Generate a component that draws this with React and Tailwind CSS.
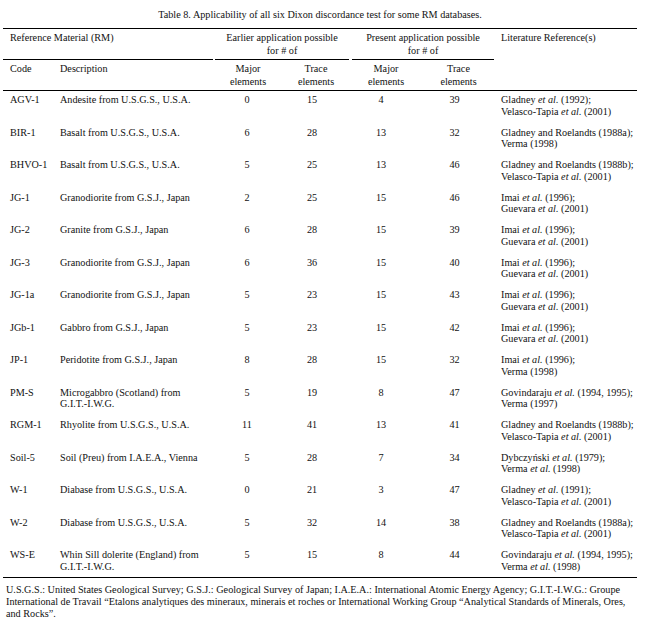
const rows = [
  ["AGV-1", ["Andesite from U.S.G.S., U.S.A."], 0, 15, 4, 39, [["Gladney ", true, " (1992);"], ["Velasco-Tapia ", true, " (2001)"]]],
  ["BIR-1", ["Basalt from U.S.G.S., U.S.A."], 6, 28, 13, 32, [["Gladney and Roelandts (1988a);"], ["Verma (1998)"]]],
  ["BHVO-1", ["Basalt from U.S.G.S., U.S.A."], 5, 25, 13, 46, [["Gladney and Roelandts (1988b);"], ["Velasco-Tapia ", true, " (2001)"]]],
  ["JG-1", ["Granodiorite from G.S.J., Japan"], 2, 25, 15, 46, [["Imai ", true, " (1996);"], ["Guevara ", true, " (2001)"]]],
  ["JG-2", ["Granite from G.S.J., Japan"], 6, 28, 15, 39, [["Imai ", true, " (1996);"], ["Guevara ", true, " (2001)"]]],
  ["JG-3", ["Granodiorite from G.S.J., Japan"], 6, 36, 15, 40, [["Imai ", true, " (1996);"], ["Guevara ", true, " (2001)"]]],
  ["JG-1a", ["Granodiorite from G.S.J., Japan"], 5, 23, 15, 43, [["Imai ", true, " (1996);"], ["Guevara ", true, " (2001)"]]],
  ["JGb-1", ["Gabbro from G.S.J., Japan"], 5, 23, 15, 42, [["Imai ", true, " (1996);"], ["Guevara ", true, " (2001)"]]],
  ["JP-1", ["Peridotite from G.S.J., Japan"], 8, 28, 15, 32, [["Imai ", true, " (1996);"], ["Verma (1998)"]]],
  ["PM-S", ["Microgabbro (Scotland) from", "G.I.T.-I.W.G."], 5, 19, 8, 47, [["Govindaraju ", true, " (1994, 1995);"], ["Verma (1997)"]]],
  ["RGM-1", ["Rhyolite from U.S.G.S., U.S.A."], 11, 41, 13, 41, [["Gladney and Roelandts (1988b);"], ["Velasco-Tapia ", true, " (2001)"]]],
  ["Soil-5", ["Soil (Preu) from I.A.E.A., Vienna"], 5, 28, 7, 34, [["Dybczyński ", true, " (1979);"], ["Verma ", true, " (1998)"]]],
  ["W-1", ["Diabase from U.S.G.S., U.S.A."], 0, 21, 3, 47, [["Gladney ", true, " (1991);"], ["Velasco-Tapia ", true, " (2001)"]]],
  ["W-2", ["Diabase from U.S.G.S., U.S.A."], 5, 32, 14, 38, [["Gladney and Roelandts (1988a);"], ["Velasco-Tapia ", true, " (2001)"]]],
  ["WS-E", ["Whin Sill dolerite (England) from", "G.I.T.-I.W.G."], 5, 15, 8, 44, [["Govindaraju ", true, " (1994, 1995);"], ["Verma ", true, " (1998)"]]],
];

const cols = "grid grid-cols-[50px_161px_68px_68px_72px_73px_1fr]";

function RefLine({ parts }) {
  if (parts.length === 1) return <div>{parts[0]}</div>;
  return (
    <div>
      {parts[0]}
      <i>et al.</i>
      {parts[2]}
    </div>
  );
}

export default function App() {
  return (
    <div className="min-h-[621px] w-[646px] bg-white font-['Liberation_Serif','Times_New_Roman',serif] text-[10.2px] leading-[11.5px] text-[#111]">
      <div className="ml-[3px] w-[634px]">
        <div className="pt-[9px] pb-[7px] text-center leading-[12px]">
          Table 8. Applicability of all six Dixon discordance test for some RM databases.
        </div>

        <div className="border-t border-black">
          <div className="grid grid-cols-[211px_136px_145px_1fr]">
            <div className="mr-[1px] border-b border-black pt-[3px] pb-[2px] pl-[7px] leading-[12.5px]">
              Reference Material (RM)
            </div>
            <div className="mx-[1px] border-b border-black pt-[3px] pb-[2px] text-center leading-[12.5px]">
              Earlier application possible
              <br />
              for # of
            </div>
            <div className="ml-[2px] mr-[1px] border-b border-black pt-[3px] pb-[2px] text-center leading-[12.5px]">
              Present application possible
              <br />
              for # of
            </div>
            <div className="pt-[3px] pl-[6px] leading-[12.5px]">Literature Reference(s)</div>
          </div>

          <div className={`${cols} border-b border-black pt-[3px] pb-[2px] leading-[12.5px]`}>
            <div className="pl-[7px]">Code</div>
            <div className="pl-[7px]">Description</div>
            <div className="text-center">
              Major
              <br />
              elements
            </div>
            <div className="text-center">
              Trace
              <br />
              elements
            </div>
            <div className="text-center">
              Major
              <br />
              elements
            </div>
            <div className="text-center">
              Trace
              <br />
              elements
            </div>
            <div />
          </div>
        </div>

        <div className="border-b border-black">
          {rows.map(([code, desc, em, et, pm, pt, refs], i) => (
            <div
              key={code}
              className={`${cols} pt-[3px] ${i === rows.length - 1 ? "pb-[5px]" : "pb-[6.5px]"}`}
            >
              <div className="pl-[7px]">{code}</div>
              <div className="pl-[7px]">
                {desc.map((d) => (
                  <div key={d}>{d}</div>
                ))}
              </div>
              <div className="pr-[2px] text-center">{em}</div>
              <div className="pr-[8px] text-center">{et}</div>
              <div className="pr-[10px] text-center">{pm}</div>
              <div className="pr-[8px] text-center">{pt}</div>
              <div className="pl-[6px]">
                {refs.map((r, j) => (
                  <RefLine key={j} parts={r[1] ? r : [r[0]]} />
                ))}
              </div>
            </div>
          ))}
        </div>

        <div className="pt-[6px] pl-[3px] leading-[12px]">
          U.S.G.S.: United States Geological Survey; G.S.J.: Geological Survey of Japan; I.A.E.A.:
          International Atomic Energy Agency; G.I.T.-I.W.G.: Groupe International de Travail
          “Etalons analytiques des mineraux, minerais et roches or International Working Group
          “Analytical Standards of Minerals, Ores, and Rocks”.
        </div>
      </div>
    </div>
  );
}
